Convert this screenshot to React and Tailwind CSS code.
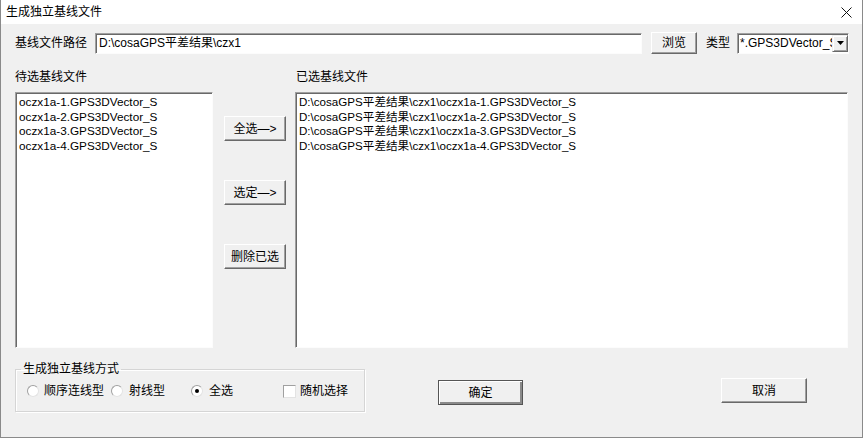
import React from 'react';

const files = [
  'oczx1a-1.GPS3DVector_S',
  'oczx1a-2.GPS3DVector_S',
  'oczx1a-3.GPS3DVector_S',
  'oczx1a-4.GPS3DVector_S',
];

const sunken =
  'bg-white border border-t-[#a0a0a0] border-l-[#a0a0a0] border-r-[#fcfcfc] border-b-[#fcfcfc] shadow-[inset_1px_1px_0_#696969]';

function Btn({ className = '', children }) {
  return (
    <button
      className={`flex items-center justify-center bg-[#f0f0f0] border border-t-white border-l-white border-r-[#696969] border-b-[#696969] shadow-[inset_-1px_-1px_0_#a0a0a0] text-[12px] text-black ${className}`}
    >
      {children}
    </button>
  );
}

function Radio({ checked }) {
  return (
    <span className="w-[12px] h-[12px] rounded-full bg-white border border-t-[#a0a0a0] border-l-[#a0a0a0] border-r-[#e3e3e3] border-b-[#e3e3e3] flex items-center justify-center">
      {checked && <span className="w-[4px] h-[4px] rounded-full bg-black" />}
    </span>
  );
}

export default function App() {
  return (
    <div className="w-[865px] h-[439px] bg-white flex font-['Liberation_Sans','Noto_Sans_CJK_SC',sans-serif] text-[12px] text-black leading-[14px]">
      <div className="w-[863px] h-[438px] flex flex-col bg-[#f0f0f0] border-l border-r border-b border-[#8a8a8a]">
        {/* title bar */}
        <div className="h-[24px] bg-white flex items-center justify-between pl-[5px] pr-[10px]">
          <span>生成独立基线文件</span>
          <svg width="11" height="11" viewBox="0 0 11 11" className="mt-[1px]">
            <path d="M0.5 0.5L10.5 10.5M10.5 0.5L0.5 10.5" stroke="#111" strokeWidth="1" />
          </svg>
        </div>

        <div className="flex flex-col pl-[14px]">
          {/* path row */}
          <div className="flex items-center mt-[8px] h-[22px]">
            <span className="w-[80px]">基线文件路径</span>
            <div className={`w-[547px] h-[21px] flex items-center pl-[3px] ${sunken}`}>
              D:\cosaGPS平差结果\czx1
            </div>
            <Btn className="ml-[9px] w-[46px] h-[22px]">浏览</Btn>
            <span className="ml-[9px] w-[31px]">类型</span>
            <div className={`w-[112px] h-[21px] flex items-center overflow-hidden ${sunken}`}>
              <span className="flex-1 pl-[2px] overflow-hidden whitespace-nowrap">*.GPS3DVector_S</span>
              <span className="w-[16px] h-[17px] shrink-0 flex items-center justify-center bg-[#f0f0f0] border border-t-[#f0f0f0] border-l-[#f0f0f0] border-r-[#696969] border-b-[#696969] shadow-[inset_1px_1px_0_#fff,inset_-1px_-1px_0_#a0a0a0]">
                <svg width="7" height="4" viewBox="0 0 7 4">
                  <path d="M0 0H7L3.5 4Z" fill="#000" />
                </svg>
              </span>
            </div>
          </div>

          {/* labels */}
          <div className="flex mt-[16px] h-[14px]">
            <span className="w-[281px]">待选基线文件</span>
            <span>已选基线文件</span>
          </div>

          {/* lists */}
          <div className="flex mt-[8px]">
            <div className={`w-[198px] h-[256px] pl-[2px] pt-[2px] text-[11.75px] leading-[14.7px] ${sunken}`}>
              {files.map((f) => (
                <div key={f} className="pl-[1px]">{f}</div>
              ))}
            </div>
            <div className="w-[62px] ml-[11px] flex flex-col pt-[24px] gap-[39px]">
              <Btn className="w-[62px] h-[25px]">全选—&gt;</Btn>
              <Btn className="w-[62px] h-[25px]">选定—&gt;</Btn>
              <Btn className="w-[62px] h-[25px]">删除已选</Btn>
            </div>
            <div className={`w-[553px] h-[256px] ml-[9px] pl-[2px] pt-[2px] text-[11.6px] leading-[14.7px] ${sunken}`}>
              {files.map((f) => (
                <div key={f} className="pl-[1px]">D:\cosaGPS平差结果\czx1\{f}</div>
              ))}
            </div>
          </div>

          {/* bottom */}
          <div className="flex items-start mt-[14px]">
            <fieldset className="w-[350px] h-[50px] border border-[#d5d5d5] shadow-[1px_1px_0_#fff,inset_1px_1px_0_#fff]">
              <legend className="ml-[5px] px-[2px]">生成独立基线方式</legend>
              <div className="flex items-center mt-[8px] h-[14px] pl-[11px]">
                <div className="w-[84px] flex items-center">
                  <Radio />
                  <span className="ml-[5px]">顺序连线型</span>
                </div>
                <div className="w-[80px] flex items-center">
                  <Radio />
                  <span className="ml-[6px]">射线型</span>
                </div>
                <div className="w-[92px] flex items-center">
                  <Radio checked />
                  <span className="ml-[6px]">全选</span>
                </div>
                <div className="flex items-center">
                  <span className="w-[13px] h-[13px] bg-white border border-t-[#a0a0a0] border-l-[#a0a0a0] border-r-[#e3e3e3] border-b-[#e3e3e3]" />
                  <span className="ml-[4px]">随机选择</span>
                </div>
              </div>
            </fieldset>
            <button className="ml-[73px] mt-[18px] w-[85px] h-[25px] flex items-center justify-center bg-[#f0f0f0] border border-[#555] shadow-[inset_1px_1px_0_#fff,inset_-2px_-2px_0_#8a8a8a] text-[12px]">
              确定
            </button>
            <Btn className="ml-[198px] mt-[16px] w-[86px] h-[25px]">取消</Btn>
          </div>
        </div>
      </div>
    </div>
  );
}
